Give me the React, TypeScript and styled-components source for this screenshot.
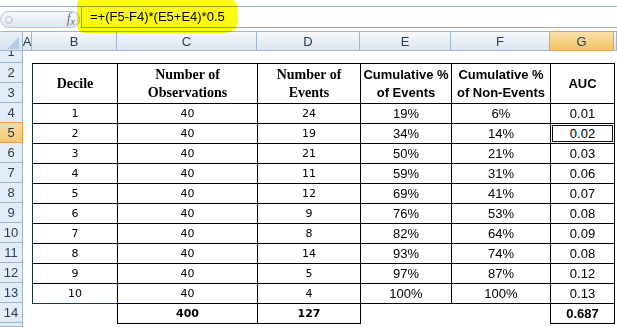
import styled, { createGlobalStyle, css } from 'styled-components';

const GlobalStyle = createGlobalStyle`
  html, body {
    margin: 0;
    padding: 0;
    background: #fff;
  }
  body {
    width: 617px;
    height: 327px;
    overflow: hidden;
    font-family: "Liberation Sans", Arial, sans-serif;
  }
`;

const letters = ['A', 'B', 'C', 'D', 'E', 'F', 'G'];
const selectedCol = 'G';
const selectedRow = 5;

const events = [24, 19, 21, 11, 12, 9, 8, 14, 5, 4];
const cumEvents = [19, 34, 50, 59, 69, 76, 82, 93, 97, 100];
const cumNon = [6, 14, 21, 31, 41, 53, 64, 74, 87, 100];
const auc = ['0.01', '0.02', '0.03', '0.06', '0.07', '0.08', '0.09', '0.08', '0.12', '0.13'];

// sheet row -> grid row (grid row 1 is the column header strip)
const gridRow = (sheetRow: number) => sheetRow + 1;
// column letter -> grid column (grid column 1 is the row header strip)
const gridCol = (letter: string) => letters.indexOf(letter) + 2;

export default function App() {
  return (
    <>
      <GlobalStyle />
      <Window>
        <FormulaBar>
          <BarRow>
            <NameBox>
              <Pill>
                <Knob />
                <Fx>
                  f<sub>x</sub>
                </Fx>
              </Pill>
            </NameBox>
            <FormulaField>=+(F5-F4)*(E5+E4)*0.5</FormulaField>
          </BarRow>
          <Highlighter />
        </FormulaBar>

        <Sheet>
          <Corner>
            <svg width="22" height="20" viewBox="0 0 22 20">
              <polygon points="19,5 19,17 7,17" fill="#b7cbe3" />
            </svg>
          </Corner>
          {letters.map((l) => (
            <ColHeader key={l} $col={gridCol(l)} $active={l === selectedCol}>
              {l}
            </ColHeader>
          ))}
          <ColHeader $col={9} />

          {Array.from({ length: 14 }, (_, i) => i + 1).map((r) => (
            <RowHeader key={r} $row={gridRow(r)} $active={r === selectedRow} $short={r === 1}>
              {r}
            </RowHeader>
          ))}
          {/* row 15 only peeks in at the bottom edge */}
          <RowHeader $row={gridRow(15)} />

          {/* header block, rows 2-3 merged */}
          <Cell $col={gridCol('B')} $row={gridRow(2)} $span={2} $font="serif" $bold $navy>
            Decile
          </Cell>
          <Cell $col={gridCol('C')} $row={gridRow(2)} $span={2} $font="serif" $bold>
            Number of
            <br />
            Observations
          </Cell>
          <Cell $col={gridCol('D')} $row={gridRow(2)} $span={2} $font="serif" $bold>
            Number of
            <br />
            Events
          </Cell>
          <Cell $col={gridCol('E')} $row={gridRow(2)} $span={2} $font="sans" $bold>
            Cumulative %
            <br />
            of Events
          </Cell>
          <Cell $col={gridCol('F')} $row={gridRow(2)} $span={2} $font="sans" $bold>
            Cumulative %
            <br />
            of Non-Events
          </Cell>
          <Cell $col={gridCol('G')} $row={gridRow(2)} $span={2} $font="sans" $bold>
            AUC
          </Cell>

          {events.map((ev, i) => {
            const r = gridRow(4 + i);
            return [
              <Cell key={`b${i}`} $col={gridCol('B')} $row={r} $font="verdana" $navy>
                {i + 1}
              </Cell>,
              <Cell key={`c${i}`} $col={gridCol('C')} $row={r} $font="verdana">
                40
              </Cell>,
              <Cell key={`d${i}`} $col={gridCol('D')} $row={r} $font="verdana">
                {ev}
              </Cell>,
              <Cell key={`e${i}`} $col={gridCol('E')} $row={r} $font="sans">
                {cumEvents[i]}%
              </Cell>,
              <Cell key={`f${i}`} $col={gridCol('F')} $row={r} $font="sans">
                {cumNon[i]}%
              </Cell>,
              <Cell key={`g${i}`} $col={gridCol('G')} $row={r} $font="sans" $selected={4 + i === selectedRow}>
                {auc[i]}
              </Cell>,
            ];
          })}

          {/* totals */}
          <Cell $col={gridCol('C')} $row={gridRow(14)} $font="verdana" $bold>
            400
          </Cell>
          <Cell $col={gridCol('D')} $row={gridRow(14)} $font="verdana" $bold>
            127
          </Cell>
          <Cell $col={gridCol('G')} $row={gridRow(14)} $font="sans" $bold>
            0.687
          </Cell>
        </Sheet>
      </Window>
    </>
  );
}

const Window = styled.div`
  display: flex;
  flex-direction: column;
  width: 617px;
  height: 327px;
  overflow: hidden;
  background: #fff;
`;

// formula bar
const FormulaBar = styled.div`
  position: relative;
  height: 31px;
  padding-top: 6px;
  box-sizing: border-box;
  background: #fff;
`;

const BarRow = styled.div`
  display: flex;
  height: 21px;
  border-top: 1px solid #9aabc3;
`;

const NameBox = styled.div`
  width: 81px;
  display: flex;
  align-items: flex-start;
`;

const Pill = styled.div`
  position: relative;
  margin-top: 4px;
  width: 80px;
  height: 17px;
  box-sizing: border-box;
  border: 1px solid #b9c4d3;
  border-radius: 9px;
  background: linear-gradient(#f6f8fb, #dfe5ee);
  display: flex;
  align-items: center;
`;

const Knob = styled.span`
  margin-left: 4px;
  width: 6px;
  height: 6px;
  border-radius: 50%;
  background: radial-gradient(circle at 40% 35%, #ffffff, #c5ccd6);
  border: 1px solid #c0c7d1;
`;

const Fx = styled.span`
  margin-left: auto;
  margin-right: 4px;
  font-family: "Liberation Serif", "Times New Roman", serif;
  font-style: italic;
  font-size: 14px;
  color: #6e6e6e;
  line-height: 1;

  sub {
    font-size: 10px;
    vertical-align: -2px;
  }
`;

const FormulaField = styled.div`
  flex: 1;
  border-left: 1px solid #9aabc3;
  border-bottom: 1px solid #9aabc3;
  padding-left: 8px;
  font-family: "Liberation Sans", Arial, sans-serif;
  font-size: 13px;
  line-height: 20px;
  color: #000;
`;

const Highlighter = styled.div`
  position: absolute;
  left: 77px;
  top: 0;
  width: 160px;
  height: 33px;
  background: #fafa12;
  mix-blend-mode: multiply;
  border-radius: 3px 6px 12px 8px / 4px 5px 10px 8px;
  filter: blur(0.4px);
  pointer-events: none;
`;

// sheet grid
const Sheet = styled.div`
  flex: 1;
  display: grid;
  grid-template-columns: 23px 9px 85px 140px 103px 91px 99px 64px 1fr;
  grid-template-rows: 20px 12px repeat(13, 20px) 1fr;
  background: #fff;
`;

const headerText = css`
  font-family: "Liberation Sans", Arial, sans-serif;
  font-size: 13px;
  color: #27405f;
`;

const Corner = styled.div`
  grid-column: 1;
  grid-row: 1;
  box-sizing: border-box;
  border-top: 1px solid #9eb6ce;
  border-right: 1px solid #9eb6ce;
  border-bottom: 1px solid #9eb6ce;
  background: linear-gradient(#e9eff7, #d7e2ef);
  overflow: hidden;
  line-height: 0;
`;

const ColHeader = styled.div<{ $col: number; $active?: boolean }>`
  ${headerText};
  grid-column: ${({ $col }) => $col};
  grid-row: 1;
  box-sizing: border-box;
  border-top: 1px solid #9eb6ce;
  border-right: 1px solid #9eb6ce;
  border-bottom: 1px solid #9eb6ce;
  background: linear-gradient(#f6f9fc, #dce4ef);
  display: flex;
  align-items: center;
  justify-content: center;
  overflow: hidden;

  ${({ $active }) =>
    $active &&
    css`
      background: linear-gradient(#fae0ae, #f2c462);
      border-color: #f2a03f;
      border-left: 1px solid #f2a03f;
      margin-left: -1px;
    `}
`;

const RowHeader = styled.div<{ $row: number; $active?: boolean; $short?: boolean }>`
  ${headerText};
  grid-column: 1;
  grid-row: ${({ $row }) => $row};
  box-sizing: border-box;
  border-right: 1px solid #9eb6ce;
  border-bottom: 1px solid #9eb6ce;
  background: #e4ecf7;
  display: flex;
  align-items: ${({ $short }) => ($short ? 'flex-end' : 'center')};
  justify-content: center;
  line-height: 20px;
  overflow: hidden;

  ${({ $active }) =>
    $active &&
    css`
      background: linear-gradient(#fbdca3, #f6c873);
      border-color: #f2a03f;
      border-top: 1px solid #f2a03f;
      margin-top: -1px;
      color: #1f3450;
    `}
`;

type CellFont = 'serif' | 'sans' | 'verdana';

const fonts: Record<CellFont, ReturnType<typeof css>> = {
  serif: css`
    font-family: "Liberation Serif", "Times New Roman", serif;
    font-size: 14px;
    line-height: 18px;
  `,
  sans: css`
    font-family: "Liberation Sans", Arial, sans-serif;
    font-size: 13px;
    line-height: 18px;
  `,
  verdana: css`
    font-family: "DejaVu Sans", Verdana, sans-serif;
    font-size: 11px;
    line-height: 16px;
  `,
};

const Cell = styled.div<{
  $col: number;
  $row: number;
  $span?: number;
  $font: CellFont;
  $bold?: boolean;
  $navy?: boolean;
  $selected?: boolean;
}>`
  grid-column: ${({ $col }) => $col};
  grid-row: ${({ $row }) => $row} / span ${({ $span }) => $span ?? 1};
  margin: 0 -1px -1px 0;
  border: 1px solid #000;
  display: flex;
  align-items: center;
  justify-content: center;
  text-align: center;
  color: #000;
  background: #fff;
  ${({ $font }) => fonts[$font]};
  font-weight: ${({ $bold }) => ($bold ? 700 : 400)};

  ${({ $navy }) =>
    $navy &&
    css`
      border-left-color: #1e3052;
      border-bottom-color: #1e3052;
    `}

  ${({ $selected }) =>
    $selected &&
    css`
      position: relative;
      z-index: 1;
      box-shadow: inset 0 0 0 1px #fff, inset 0 0 0 2px #111;
    `}
`;
